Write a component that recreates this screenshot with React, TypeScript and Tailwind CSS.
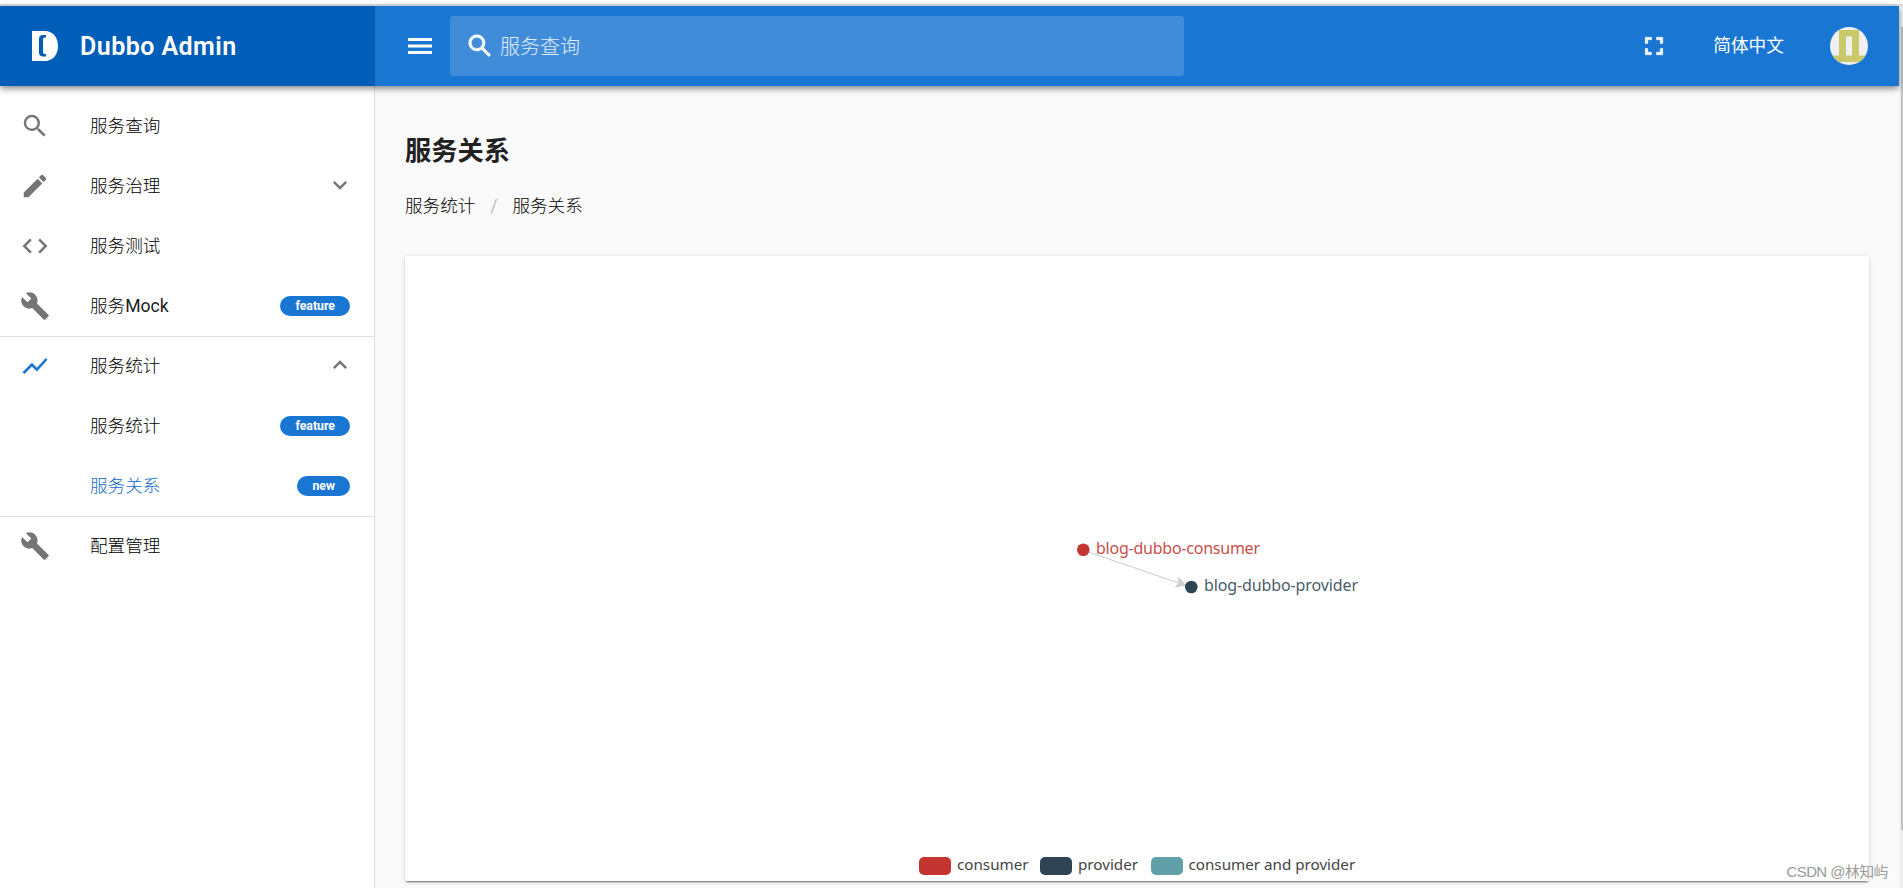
import type { ReactNode } from 'react';
import {
  MdBuild,
  MdCode,
  MdEdit,
  MdExpandLess,
  MdExpandMore,
  MdFullscreen,
  MdSearch,
  MdShowChart,
} from 'react-icons/md';

type ItemProps = {
  icon?: ReactNode;
  label: string;
  latin?: string;
  chip?: string;
  arrow?: 'up' | 'down';
  active?: boolean;
  divided?: boolean;
};

function NavItem({ icon, label, latin, chip, arrow, active, divided }: ItemProps) {
  return (
    <li
      className={`flex h-[60px] items-center pr-6 pl-5 ${divided ? 'border-t border-[#dfdfdf] pb-px' : ''} ${
        active ? 'text-[#0b6bcb]' : 'text-black'
      }`}
    >
      <span className="flex w-[70px] shrink-0 text-[30px] text-[#757575]">{icon}</span>
      <span className="flex-1 pt-[2px] text-[17.6px] leading-none font-light">
        {label}
        <span className="font-normal text-[#212121]">{latin}</span>
      </span>
      {chip && (
        <span className="flex h-5 items-center rounded-full bg-[#1976d2] px-[15px] text-[12.3px] leading-none font-bold text-white">
          {chip}
        </span>
      )}
      {arrow && (
        <span className="mr-[-4px] pb-[2px] text-[28px] text-[#757575]">
          {arrow === 'down' ? <MdExpandMore /> : <MdExpandLess />}
        </span>
      )}
    </li>
  );
}

function Logo() {
  return (
    <svg width="26" height="30" viewBox="0 0 26 30">
      <path
        fill="#fff"
        fillRule="evenodd"
        d="M0 0H13C21 0 26 6.5 26 15S21 30 13 30H0ZM14 4H11Q7 4 7 8V21.500Q7 25.500 11 25.500H14V23H12.500Q11 23 11 21V8.500Q11 6.500 12.500 6.500H14Z"
      />
    </svg>
  );
}

function MenuIcon() {
  return (
    <svg width="30" height="30" viewBox="0 0 30 30">
      <path fill="#fff" d="M3 7H27V10H3ZM3 13.500H27V16.500H3ZM3 20H27V23H3Z" />
    </svg>
  );
}

function Avatar() {
  return (
    <svg width="38" height="38" viewBox="0 0 38 38">
      <clipPath id="round">
        <circle cx="19" cy="19" r="19" />
      </clipPath>
      <g clipPath="url(#round)">
        <rect width="38" height="38" fill="#f0f0f0" />
        <path fill="#c9c96b" fillRule="evenodd" d="M9 3H29V28.500H38V35H0V28.500H9ZM16 9.500V28.500H22V9.500Z" />
      </g>
    </svg>
  );
}

function Graph() {
  return (
    <svg width="1464" height="625" viewBox="0 0 1464 625" className="font-['Noto_Sans'] text-[16px]">
      <path d="M684 296.300L774 327" stroke="#cfcfcf" strokeWidth="1.2" />
      <path d="M781.500 329.300L769.500 331.800L773.500 326.800L773 320.300Z" fill="#cfcfcf" />
      <circle cx="678.3" cy="293.8" r="6.3" fill="#c23531" />
      <circle cx="786.300" cy="331" r="6.3" fill="#2f4554" />
      <text x="691" y="298" fill="#c23531" fillOpacity="0.9" textLength="164">
        blog-dubbo-consumer
      </text>
      <text x="799" y="335" fill="#2f4554" fillOpacity="0.9" textLength="154">
        blog-dubbo-provider
      </text>
    </svg>
  );
}

function Legend() {
  return (
    <div className="absolute inset-x-0 bottom-[5px] flex h-[20px] items-center pl-[514px] font-['Noto_Sans'] text-[15.2px] leading-none text-[#444]">
      <span className="h-[18px] w-8 rounded-[5px] bg-[#c23531]" />
      <span className="w-[89px] pb-[3px] pl-[6px]">consumer</span>
      <span className="h-[18px] w-8 rounded-[5px] bg-[#2f4554]" />
      <span className="w-[78.5px] pb-[3px] pl-[6px]">provider</span>
      <span className="h-[18px] w-8 rounded-[5px] bg-[#61a0a8]" />
      <span className="pb-[3px] pl-[6px]">consumer and provider</span>
    </div>
  );
}

export default function App() {
  return (
    <div className="relative flex h-[888px] w-[1903px] flex-col overflow-hidden bg-white font-[Roboto,'Noto_Sans_CJK_SC',sans-serif] text-[#212121]">
      <div className="h-1.5 shrink-0 border-b-2 border-[#dadce0] bg-white" />
      <div className="flex min-h-0 flex-1">
        <div className="flex w-[1899px] flex-col">
          <header className="z-10 flex h-20 shrink-0 bg-[#1976d2] text-white shadow-[0_2px_5px_-1px_rgba(0,0,0,0.3),0_4px_6px_rgba(0,0,0,0.18),0_1px_10px_rgba(0,0,0,0.12)]">
            <div className="flex w-[375px] items-center border-r border-[#0f57a3] bg-[#005eb8] pl-8">
              <Logo />
              <h1 className="ml-[22px] text-[25px] leading-none font-semibold tracking-[0.45px]">Dubbo Admin</h1>
            </div>
            <button className="ml-[30px]">
              <MenuIcon />
            </button>
            <div className="mt-2.5 ml-[15px] flex h-[60px] w-[734px] items-center rounded-[3px] bg-[#408cd9] pl-[15px]">
              <MdSearch className="size-[30px] [&>path:last-child]:stroke-white [&>path:last-child]:stroke-[0.5]" />
              <span className="ml-[5px] pt-px text-[20px] leading-none font-light text-white/85">服务查询</span>
            </div>
            <div className="ml-auto flex items-center pr-[31px]">
              <MdFullscreen className="size-[30px] [&>path:last-child]:stroke-white [&>path:last-child]:stroke-[0.4]" />
              <span className="ml-[44.500px] pt-px text-[17.7px] leading-none">简体中文</span>
              <span className="ml-[46px]">
                <Avatar />
              </span>
            </div>
          </header>
          <div className="flex min-h-0 flex-1">
            <nav className="w-[375px] shrink-0 border-r border-[#dfdfdf] bg-white pt-2.5">
              <ul>
                <NavItem icon={<MdSearch />} label="服务查询" />
                <NavItem icon={<MdEdit />} label="服务治理" arrow="down" />
                <NavItem icon={<MdCode />} label="服务测试" />
                <NavItem icon={<MdBuild />} label="服务" latin="Mock" chip="feature" />
                <NavItem icon={<MdShowChart className="text-[#1976d2]" />} label="服务统计" arrow="up" divided />
                <NavItem label="服务统计" chip="feature" />
                <NavItem label="服务关系" chip="new" active />
                <NavItem icon={<MdBuild />} label="配置管理" divided />
              </ul>
            </nav>
            <main className="flex-1 bg-[#fafafa] pl-[30px]">
              <h2 className="mt-[51px] text-[26.250px] leading-[28px] font-bold">服务关系</h2>
              <div className="mt-[32px] flex h-5 items-center text-[17.6px] leading-none font-light text-black">
                <span>服务统计</span>
                <span className="w-[37px] text-center text-[#9e9e9e]">/</span>
                <span>服务关系</span>
              </div>
              <section className="relative mt-[39px] h-[625px] w-[1464px] rounded-[2px] bg-white shadow-[0_3px_1px_-2px_rgba(0,0,0,0.3),0_2px_2px_rgba(0,0,0,0.14),0_1px_5px_rgba(0,0,0,0.12)]">
                <Graph />
                <Legend />
              </section>
            </main>
          </div>
        </div>
        <div className="w-1 bg-[#f1f1f1] pt-[21px] pl-[2px]">
          <div className="h-[803px] bg-[#c1c1c1]" />
        </div>
      </div>
      <div className="absolute right-[15px] bottom-[9px] font-['Liberation_Sans','Noto_Sans_CJK_SC',sans-serif] text-[15px] leading-none tracking-[-0.6px] text-[#999] [text-shadow:1px_1px_1px_#fff]">
        CSDN @林知屿
      </div>
    </div>
  );
}
